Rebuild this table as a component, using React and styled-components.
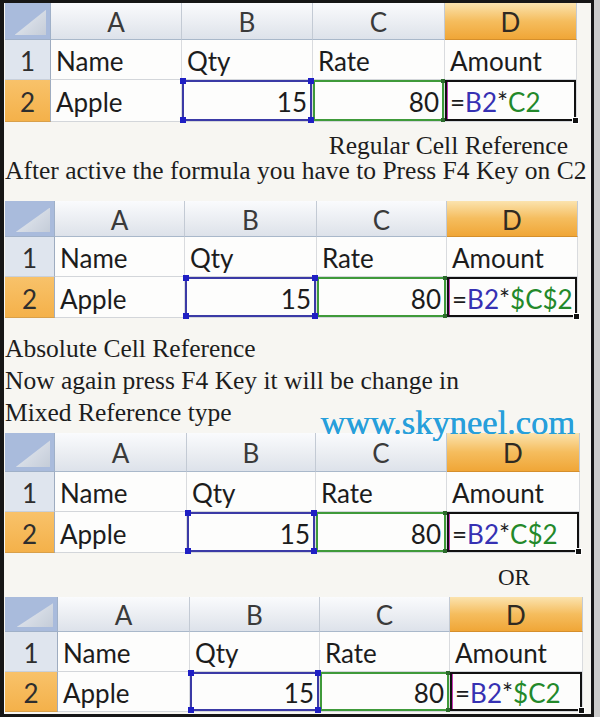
import React from "react";
import styled, { createGlobalStyle, css } from "styled-components";

const GlobalStyle = createGlobalStyle`
  html, body { margin: 0; padding: 0; background: #cbcbcb; }
  #root { width: 600px; height: 717px; }
`;

const Frame = styled.div`
  box-sizing: border-box;
  width: 594px;
  height: 717px;
  border: 3px solid #161616;
  border-left-width: 4px;
  background: #f7f6f2;
  display: flex;
  flex-direction: column;
  overflow: hidden;
`;

const Sheet = styled.div`
  display: grid;
  grid-template-columns: ${(p) => p.$cols};
  grid-template-rows: ${(p) => p.$rows};
  margin-left: 1px;
  margin-top: ${(p) => p.$top}px;
  width: max-content;
  font-family: Lato, "Noto Sans", sans-serif;
  font-size: 26px;
  color: #1c1c1c;
`;

const Corner = styled.div`
  position: relative;
  background: #a9bbdc;
  border-right: 1px solid #9fb0c8;
  border-bottom: 1px solid #9fb0c8;
  &::after {
    content: "";
    position: absolute;
    right: 4px;
    bottom: 4px;
    width: 70%;
    height: 70%;
    background: linear-gradient(135deg, #e8ecf3, #c4ccd8);
    clip-path: polygon(100% 0, 100% 100%, 0 100%);
  }
`;

const ColHead = styled.div`
  display: flex;
  align-items: center;
  justify-content: center;
  padding-top: 2px;
  color: #3a3a3a;
  background: linear-gradient(#fafbfd, #e9ecf1 60%, #dde2ea);
  border-right: 1px solid #c3cad4;
  border-bottom: 1px solid #a9b8ca;
  ${(p) =>
    p.$on &&
    css`
      background: linear-gradient(#fbe3ae, #f5bd5e 50%, #f0a637);
      border-bottom-color: #d58f2c;
      color: #2f2a22;
    `}
`;

const RowHead = styled.div`
  display: flex;
  align-items: center;
  justify-content: center;
  padding-top: 3px;
  color: #2e2e2e;
  background: ${(p) => (p.$on ? "linear-gradient(#f8c26a, #f4b14a)" : "#dfe5ee")};
  border-right: 1px solid #9eacc0;
  border-bottom: 1px solid ${(p) => (p.$on ? "#d9a04a" : "#c9d0da")};
`;

const tones = {
  blue: "#3b3aa6",
  green: "#3f9a3a",
  active: "#111111",
};

const Cell = styled.div`
  position: relative;
  display: flex;
  align-items: center;
  justify-content: ${(p) => (p.$right ? "flex-end" : "flex-start")};
  padding: 3px 5px 0;
  background: #fdfdfc;
  border-right: 1px solid #d9dbde;
  border-bottom: 1px solid #d3d6da;
  white-space: nowrap;
  ${(p) =>
    p.$mark &&
    css`
      box-shadow: inset 0 0 0 2px ${tones[p.$mark]};
    `}
  ${(p) =>
    p.$mark === "active" &&
    css`
      &::before {
        content: "";
        position: absolute;
        left: 2px;
        top: 2px;
        bottom: 2px;
        width: 1px;
        background: #c33ab5;
      }
    `}
`;

const Handle = styled.span`
  position: absolute;
  width: ${(p) => p.$size}px;
  height: ${(p) => p.$size}px;
  background: ${(p) => p.$color};
  ${(p) => (p.$pos[0] === "t" ? "top" : "bottom")}: -${(p) => p.$size / 2 - 1}px;
  ${(p) => (p.$pos[1] === "l" ? "left" : "right")}: -${(p) => p.$size / 2 - 1}px;
  z-index: 2;
`;

const FillHandle = styled.span`
  position: absolute;
  right: -3px;
  bottom: -3px;
  width: 5px;
  height: 5px;
  background: #111;
  border: 1px solid #fff;
  z-index: 2;
`;

const Token = styled.span`
  color: ${(p) => (p.$tone === "blue" ? "#3631b3" : p.$tone === "green" ? "#23892a" : "#1c1c1c")};
`;

const Note = styled.div`
  position: relative;
  margin-top: ${(p) => p.$top}px;
  font-family: "Liberation Serif", "DejaVu Serif", serif;
  font-size: ${(p) => p.$size}px;
  line-height: ${(p) => p.$line}px;
  color: #1d1d1d;
  white-space: nowrap;
  z-index: 3;
`;

const Line = styled.div`
  text-align: ${(p) => (p.$right ? "right" : "left")};
  padding-left: ${(p) => p.$indent || 1}px;
  padding-right: ${(p) => (p.$right ? 23 : 0)}px;
`;

const Watermark = styled.div`
  position: absolute;
  right: 16px;
  bottom: -5px;
  font-family: "Liberation Serif", "DejaVu Serif", serif;
  font-size: 34.5px;
  line-height: 24px;
  color: #279fdb;
  text-shadow: 0.4px 0 0 #279fdb;
`;

const corners = ["tl", "tr", "bl", "br"];

function Spreadsheet({ cols, rows, top, formula }) {
  return (
    <Sheet $cols={cols} $rows={rows} $top={top}>
      <Corner />
      <ColHead>A</ColHead>
      <ColHead>B</ColHead>
      <ColHead>C</ColHead>
      <ColHead $on>D</ColHead>

      <RowHead>1</RowHead>
      <Cell>Name</Cell>
      <Cell>Qty</Cell>
      <Cell>Rate</Cell>
      <Cell>Amount</Cell>

      <RowHead $on>2</RowHead>
      <Cell>Apple</Cell>
      <Cell $right $mark="blue">
        15
        {corners.map((c) => (
          <Handle key={c} $pos={c} $size={6} $color="#1f1fc4" />
        ))}
      </Cell>
      <Cell $right $mark="green">
        80
        {["tr", "br"].map((c) => (
          <Handle key={c} $pos={c} $size={4} $color="#2c6a2c" />
        ))}
      </Cell>
      <Cell $mark="active">
        {formula.map((f, i) => (
          <Token key={i} $tone={f.tone}>
            {f.text}
          </Token>
        ))}
        <FillHandle />
      </Cell>
    </Sheet>
  );
}

const f = (ref) => [
  { text: "=", tone: "plain" },
  { text: "B2", tone: "blue" },
  { text: "*", tone: "plain" },
  { text: ref, tone: "green" },
];

export default function App() {
  return (
    <>
      <GlobalStyle />
      <Frame>
        <Spreadsheet
          cols="46px 131px 131px 132px 132px"
          rows="37px 40px 42px"
          top={0}
          formula={f("C2")}
        />

        <Note $top={11} $size={25.5} $line={25}>
          <Line $right>Regular Cell Reference</Line>
          <Line>After active the formula you have to Press F4 Key on C2</Line>
        </Note>

        <Spreadsheet
          cols="50px 130px 132px 130px 131px"
          rows="36px 40px 41px"
          top={18}
          formula={f("$C$2")}
        />

        <Note $top={15} $size={25.5} $line={32}>
          <Line>Absolute Cell Reference</Line>
          <Line>Now again press F4 Key it will be change in</Line>
          <Line>Mixed Reference type</Line>
          <Watermark>www.skyneel.com</Watermark>
        </Note>

        <Spreadsheet
          cols="50px 132px 129px 131px 133px"
          rows="39px 40px 41px"
          top={4}
          formula={f("C$2")}
        />

        <Note $top={13} $size={23} $line={24}>
          <Line $indent={494}>OR</Line>
        </Note>

        <Spreadsheet
          cols="53px 132px 130px 130px 133px"
          rows="35px 40px 40px"
          top={7}
          formula={f("$C2")}
        />
      </Frame>
    </>
  );
}
